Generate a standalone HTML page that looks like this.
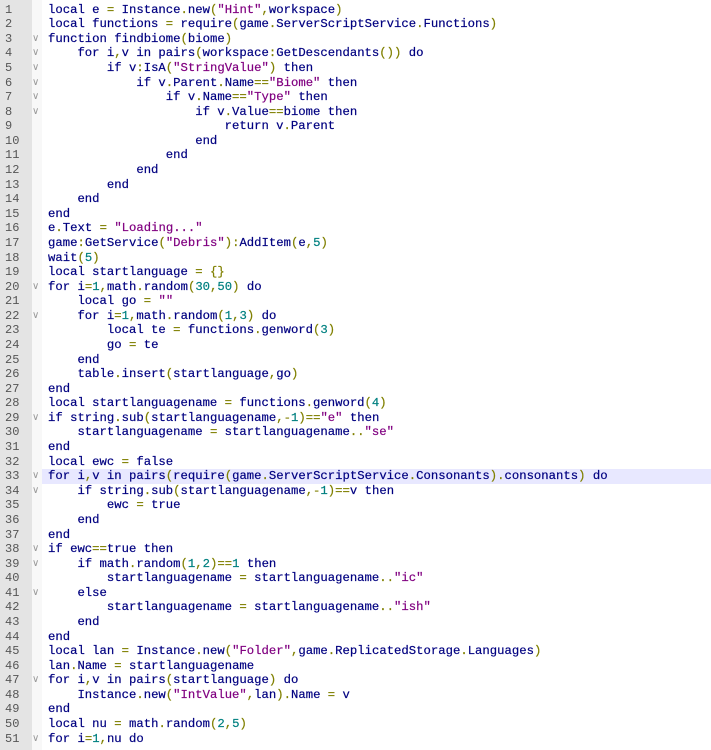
<!DOCTYPE html>
<html><head><meta charset="utf-8"><style>
html,body{margin:0;padding:0;background:#fff;width:711px;height:750px;overflow:hidden;position:relative}
#g{position:absolute;left:0;top:0;width:32px;height:750px;background:#e4e4e4}
#f{position:absolute;left:32px;top:0;width:10px;height:750px;background:#f8f8f8}
#hl{position:absolute;left:42px;top:469.3px;width:669px;height:14.6px;background:#e8e8ff}
pre{margin:0;position:absolute;top:2.7px;line-height:14.58px;font-size:12.27px;white-space:pre}
#num{left:5px;color:#555;font-family:"Liberation Mono",monospace;font-size:12px}
#fold{left:32px;color:#9a9a9a;font-family:"DejaVu Sans",sans-serif;font-size:10px}
#code{left:48px;font-family:"Liberation Mono",monospace;color:#000080;-webkit-text-stroke:0.2px currentColor}
i{font-style:normal}
.o{color:#808000}.d{color:#008080}.s{color:#800080}
</style></head><body>
<div id="g"></div><div id="f"></div><div id="hl"></div>
<pre id="num">1
2
3
4
5
6
7
8
9
10
11
12
13
14
15
16
17
18
19
20
21
22
23
24
25
26
27
28
29
30
31
32
33
34
35
36
37
38
39
40
41
42
43
44
45
46
47
48
49
50
51</pre>
<pre id="fold">


&#8744;
&#8744;
&#8744;
&#8744;
&#8744;
&#8744;











&#8744;

&#8744;






&#8744;



&#8744;
&#8744;



&#8744;
&#8744;

&#8744;





&#8744;



&#8744;</pre>
<pre id="code">local e <i class="o">=</i> Instance<i class="o">.</i>new<i class="o">(</i><i class="s">"Hint"</i><i class="o">,</i>workspace<i class="o">)</i>
local functions <i class="o">=</i> require<i class="o">(</i>game<i class="o">.</i>ServerScriptService<i class="o">.</i>Functions<i class="o">)</i>
function findbiome<i class="o">(</i>biome<i class="o">)</i>
    for i<i class="o">,</i>v in pairs<i class="o">(</i>workspace<i class="o">:</i>GetDescendants<i class="o">())</i> do
        if v<i class="o">:</i>IsA<i class="o">(</i><i class="s">"StringValue"</i><i class="o">)</i> then
            if v<i class="o">.</i>Parent<i class="o">.</i>Name<i class="o">==</i><i class="s">"Biome"</i> then
                if v<i class="o">.</i>Name<i class="o">==</i><i class="s">"Type"</i> then
                    if v<i class="o">.</i>Value<i class="o">==</i>biome then
                        return v<i class="o">.</i>Parent
                    end
                end
            end
        end
    end
end
e<i class="o">.</i>Text <i class="o">=</i> <i class="s">"Loading..."</i>
game<i class="o">:</i>GetService<i class="o">(</i><i class="s">"Debris"</i><i class="o">):</i>AddItem<i class="o">(</i>e<i class="o">,</i><i class="d">5</i><i class="o">)</i>
wait<i class="o">(</i><i class="d">5</i><i class="o">)</i>
local startlanguage <i class="o">=</i> <i class="o">{}</i>
for i<i class="o">=</i><i class="d">1</i><i class="o">,</i>math<i class="o">.</i>random<i class="o">(</i><i class="d">30</i><i class="o">,</i><i class="d">50</i><i class="o">)</i> do
    local go <i class="o">=</i> <i class="s">""</i>
    for i<i class="o">=</i><i class="d">1</i><i class="o">,</i>math<i class="o">.</i>random<i class="o">(</i><i class="d">1</i><i class="o">,</i><i class="d">3</i><i class="o">)</i> do
        local te <i class="o">=</i> functions<i class="o">.</i>genword<i class="o">(</i><i class="d">3</i><i class="o">)</i>
        go <i class="o">=</i> te
    end
    table<i class="o">.</i>insert<i class="o">(</i>startlanguage<i class="o">,</i>go<i class="o">)</i>
end
local startlanguagename <i class="o">=</i> functions<i class="o">.</i>genword<i class="o">(</i><i class="d">4</i><i class="o">)</i>
if string<i class="o">.</i>sub<i class="o">(</i>startlanguagename<i class="o">,-</i><i class="d">1</i><i class="o">)==</i><i class="s">"e"</i> then
    startlanguagename <i class="o">=</i> startlanguagename<i class="o">..</i><i class="s">"se"</i>
end
local ewc <i class="o">=</i> false
for i<i class="o">,</i>v in pairs<i class="o">(</i>require<i class="o">(</i>game<i class="o">.</i>ServerScriptService<i class="o">.</i>Consonants<i class="o">).</i>consonants<i class="o">)</i> do
    if string<i class="o">.</i>sub<i class="o">(</i>startlanguagename<i class="o">,-</i><i class="d">1</i><i class="o">)==</i>v then
        ewc <i class="o">=</i> true
    end
end
if ewc<i class="o">==</i>true then
    if math<i class="o">.</i>random<i class="o">(</i><i class="d">1</i><i class="o">,</i><i class="d">2</i><i class="o">)==</i><i class="d">1</i> then
        startlanguagename <i class="o">=</i> startlanguagename<i class="o">..</i><i class="s">"ic"</i>
    else
        startlanguagename <i class="o">=</i> startlanguagename<i class="o">..</i><i class="s">"ish"</i>
    end
end
local lan <i class="o">=</i> Instance<i class="o">.</i>new<i class="o">(</i><i class="s">"Folder"</i><i class="o">,</i>game<i class="o">.</i>ReplicatedStorage<i class="o">.</i>Languages<i class="o">)</i>
lan<i class="o">.</i>Name <i class="o">=</i> startlanguagename
for i<i class="o">,</i>v in pairs<i class="o">(</i>startlanguage<i class="o">)</i> do
    Instance<i class="o">.</i>new<i class="o">(</i><i class="s">"IntValue"</i><i class="o">,</i>lan<i class="o">).</i>Name <i class="o">=</i> v
end
local nu <i class="o">=</i> math<i class="o">.</i>random<i class="o">(</i><i class="d">2</i><i class="o">,</i><i class="d">5</i><i class="o">)</i>
for i<i class="o">=</i><i class="d">1</i><i class="o">,</i>nu do</pre>
</body></html>
